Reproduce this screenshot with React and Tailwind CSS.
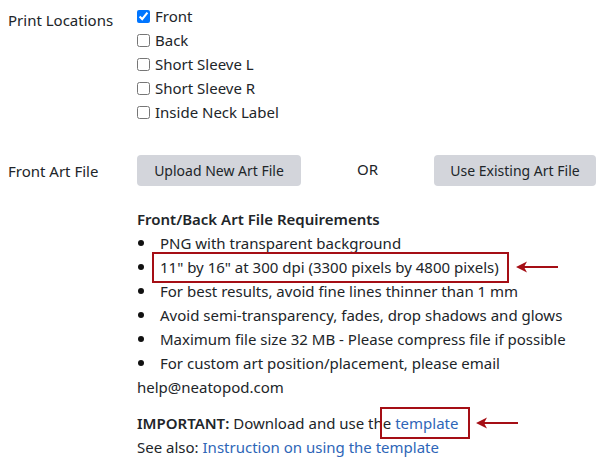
const locations = [
  { name: 'Front', checked: true },
  { name: 'Back', checked: false },
  { name: 'Short Sleeve L', checked: false },
  { name: 'Short Sleeve R', checked: false },
  { name: 'Inside Neck Label', checked: false },
]

const reqs = [
  'PNG with transparent background',
  'BOX',
  'For best results, avoid fine lines thinner than 1 mm',
  'Avoid semi-transparency, fades, drop shadows and glows',
  'Maximum file size 32 MB - Please compress file if possible',
  'For custom art position/placement, please email',
]

function Arrow({ className }) {
  return (
    <svg className={className} width="42" height="12" viewBox="0 0 42 12">
      <line x1="8" y1="6" x2="42" y2="6" stroke="#a50e15" strokeWidth="2" />
      <path d="M0 6 L11 0.5 L8 6 L11 11.5 Z" fill="#a50e15" />
    </svg>
  )
}

function Dot() {
  return (
    <span className="w-[23px] shrink-0 flex items-center pl-[1px]">
      <span className="w-[6px] h-[6px] rounded-full bg-[#111]"></span>
    </span>
  )
}

export default function App() {
  return (
    <div className="min-h-screen bg-white text-[15px] leading-6 text-[#212529]" style={{ fontFamily: '"Noto Sans", "Open Sans", sans-serif' }}>
      <div className="flex pt-1">
        <div className="w-[137px] shrink-0 pl-2 pt-1">Print Locations</div>
        <div className="flex flex-col">
          {locations.map((l) => (
            <label key={l.name} className="flex items-center h-6">
              <input type="checkbox" defaultChecked={l.checked} className="m-0 mr-[5px] w-[13px] h-[13px] accent-[#0075ff]" />
              <span>{l.name}</span>
            </label>
          ))}
        </div>
      </div>

      <div className="flex mt-[31px]">
        <div className="w-[137px] shrink-0 pl-2 flex items-center">Front Art File</div>
        <div className="w-[459px] flex items-center justify-between">
          <button className="w-[164px] h-[31px] rounded bg-[#d3d5db] text-[14px]">Upload New Art File</button>
          <span className="-mt-1">OR</span>
          <button className="w-[162px] h-[31px] rounded bg-[#d3d5db] text-[14px]">Use Existing Art File</button>
        </div>
      </div>

      <div className="ml-[137px] mt-[21px] w-[460px]">
        <div className="font-semibold">Front/Back Art File Requirements</div>
        <ul>
          {reqs.map((r) =>
            r === 'BOX' ? (
              <li key={r} className="flex items-center h-6">
                <span className="w-[15px] shrink-0 flex items-center pl-[1px]">
                  <span className="w-[6px] h-[6px] rounded-full bg-[#111]"></span>
                </span>
                <span className="border-2 border-[#a50e15] pl-[6px] pr-[8px] h-[31px] -my-[4px] flex items-center whitespace-nowrap">11" by 16" at 300 dpi (3300 pixels by 4800 pixels)</span>
                <Arrow className="ml-[7px]" />
              </li>
            ) : (
              <li key={r} className="flex h-6">
                <Dot />
                {r}
              </li>
            )
          )}
        </ul>
        <div>help@neatopod.com</div>
        <div className="mt-3 flex items-center h-6">
          <span><span className="font-semibold">IMPORTANT:</span> Download and use th</span>
          <span className="relative">
            e <a href="#" className="text-[#2e66b8]">template</a>
            <span className="absolute -left-[3px] -right-[12px] -top-[4px] -bottom-[4px] border-2 border-[#a50e15]"></span>
          </span>
          <Arrow className="ml-[18px]" />
        </div>
        <div>See also: <a href="#" className="text-[#2e66b8]">Instruction on using the template</a></div>
      </div>
    </div>
  )
}
